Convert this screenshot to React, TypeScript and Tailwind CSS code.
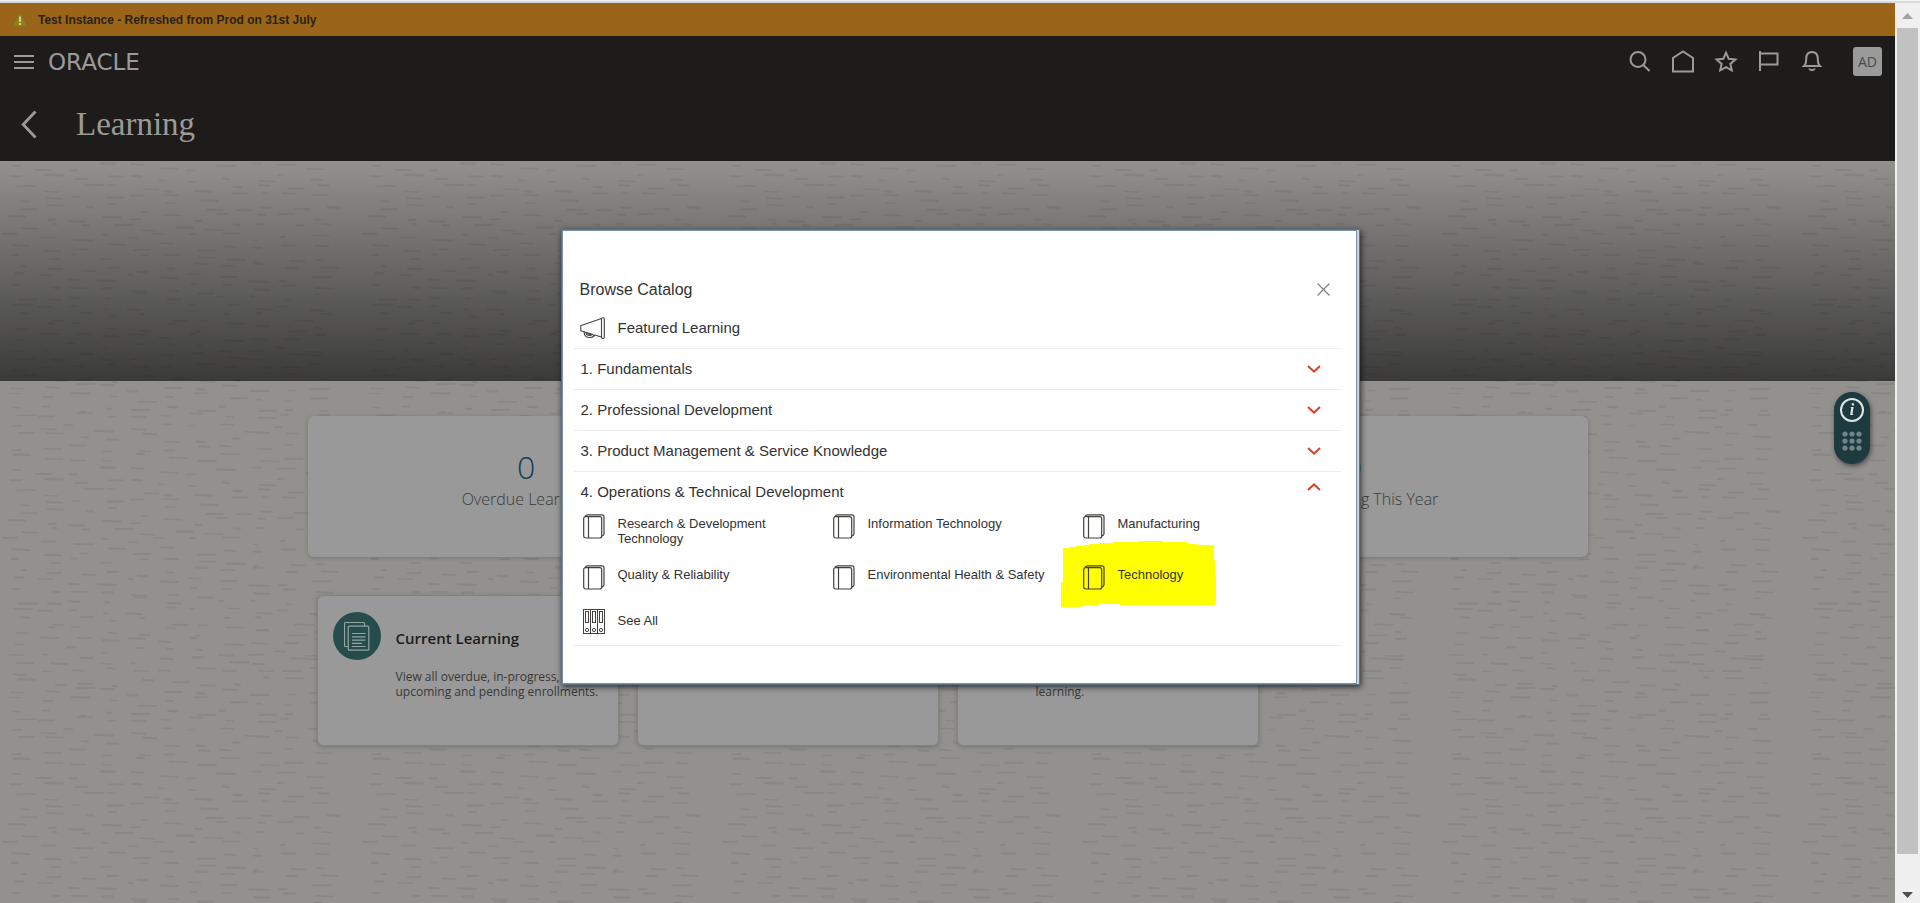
import type { ReactNode } from "react";

const sans = "font-['Liberation_Sans',Arial,sans-serif]";
const segoe = "font-['Open_Sans','Noto_Sans',sans-serif]";

// small LCG so the texture is the same on every render
function makeDashes() {
  let seed = 7;
  const rand = () => {
    seed = (seed * 16807) % 2147483647;
    return seed / 2147483647;
  };
  const list: { x: number; y: number; len: number; tilt: number; thick: number }[] = [];
  for (let row = 0; row < 30; row++) {
    const shift = rand() * 14;
    for (let col = 0; col < 11; col++) {
      list.push({
        x: 2 + col * 30 + rand() * 12 + shift,
        y: 2 + row * 10 + rand() * 9,
        len: 4 + rand() * 15,
        tilt: rand() * 1.2 - 0.4,
        thick: 1.4 + rand(),
      });
    }
  }
  return list;
}

const dashes = makeDashes();

function Texture() {
  return (
    <svg className="absolute inset-0 h-full w-full" aria-hidden="true">
      <defs>
        <pattern id="grain" width="360" height="304" patternUnits="userSpaceOnUse">
          <g stroke="#888784" strokeLinecap="round">
            {dashes.map((d, i) => (
              <line key={i} x1={d.x} y1={d.y} x2={d.x + d.len} y2={d.y + d.tilt} strokeWidth={d.thick} />
            ))}
          </g>
        </pattern>
      </defs>
      <rect width="100%" height="100%" fill="url(#grain)" />
    </svg>
  );
}

function HeaderIcon({ label, children }: { label: string; children: ReactNode }) {
  return (
    <button aria-label={label} className="h-6 w-6">
      <svg viewBox="0 0 24 24" width="24" height="24" fill="none" stroke="#9b9a99" strokeWidth="2">
        {children}
      </svg>
    </button>
  );
}

function BookIcon() {
  return (
    <svg width="22" height="25" viewBox="0 0 22 25" fill="none" stroke="#45413f" strokeWidth="1.2" className="shrink-0">
      <rect x="0.7" y="2.6" width="18" height="21.4" rx="2" />
      <path d="M5.5 2.6V24" />
      <path d="M2 2.6C2.6 1.3 3.4.8 4.6.8H19c1.4 0 2 .7 2 2v17c0 1.4-.8 2-2.3 2.4" />
    </svg>
  );
}

function BindersIcon() {
  return (
    <svg width="22" height="25" viewBox="0 0 22 25" fill="none" stroke="#45413f" strokeWidth="1" className="shrink-0">
      <rect x="0.5" y="0.5" width="21" height="24" />
      <path d="M7.5.5v24M14.5.5v24" />
      <rect x="2.5" y="2.5" width="3" height="11" />
      <rect x="9.5" y="2.5" width="3" height="11" />
      <rect x="16.5" y="2.5" width="3" height="11" />
      <circle cx="4" cy="21" r="1.6" />
      <circle cx="11" cy="21" r="1.6" />
      <circle cx="18" cy="21" r="1.6" />
    </svg>
  );
}

function Chevron({ open }: { open?: boolean }) {
  return (
    <svg width="14" height="8" viewBox="0 0 14 8" fill="none" stroke="#d6432f" strokeWidth="2">
      <path d={open ? "M1 7l6-5.6L13 7" : "M1 1l6 5.6L13 1"} />
    </svg>
  );
}

const sections = ["1. Fundamentals", "2. Professional Development", "3. Product Management & Service Knowledge"];

const topics = [
  "Research & Development Technology",
  "Information Technology",
  "Manufacturing",
  "Quality & Reliability",
  "Environmental Health & Safety",
];

const stats = [
  { value: "0", label: "Overdue Learning" },
  { value: "0", label: "Required Learning" },
  { value: "0", label: "Total Learning This Year" },
];

const cards = [
  { title: "Current Learning", text: "View all overdue, in-progress, upcoming and pending enrollments." },
  { title: "Browse Catalog", text: "View the catalog." },
  { title: "Learning History", text: "View all of your completed past learning." },
];

function CatalogDialog() {
  return (
    <div className="fixed inset-0 flex items-start justify-center pt-[229px]">
      <div
        role="dialog"
        aria-labelledby="catalog-title"
        className={`${sans} w-full max-w-[799px] border border-[#5b7489] bg-[#cdd0d2] pr-[2px] text-[#333] shadow-[1px_2px_6px_rgba(0,0,0,0.7)]`}
      >
        <div className="border border-[#7391ac] bg-white pt-10 pr-[15px] pb-[37px] pl-[10px]">
          <header className="flex h-[37px] items-center justify-between pr-[11px] pl-[7px]">
            <h2 id="catalog-title" className="text-base">Browse Catalog</h2>
            <button aria-label="Close">
              <svg width="13" height="13" viewBox="0 0 13 13" stroke="#7d8283" strokeWidth="1.2">
                <path d="M.5.5l12 12M12.5.5l-12 12" />
              </svg>
            </button>
          </header>
          <a href="#featured" className="flex h-[41px] items-center gap-[13px] border-b border-[#ececec] pl-[7px] text-[15px]">
            <svg width="25" height="22" viewBox="0 0 25 22" fill="none" stroke="#45413f" strokeWidth="1.1" strokeLinejoin="round">
              <path d="M21.5 1.6L4.2 7.4.8 8.6v5.2l3.2 1 8.8 2.8 1.2 1.4.6-1 6.9 2" />
              <rect x="21.5" y="0.8" width="2.8" height="20.6" rx="1.2" />
              <path d="M4 14.8c.2 2.6 1 4.2 2.4 5 2 1 5.6 1.2 7.5-.8M5.8 15.5c.2 1.7 1 2.6 2.4 2.7l3.4.2M7.5 16c1 1.4 2.5 1.9 4.3 1.4" />
            </svg>
            Featured Learning
          </a>
          {sections.map((name) => (
            <button key={name} className="flex h-[41px] w-full items-center justify-between border-b border-[#ececec] pr-5 pl-2 text-[15px]">
              {name}
              <Chevron />
            </button>
          ))}
          <button aria-expanded="true" className="flex h-10 w-full items-center justify-between pr-5 pl-2 text-[15px]">
            4. Operations &amp; Technical Development
            <span className="pb-[10px]">
              <Chevron open />
            </span>
          </button>
          <div className="grid grid-cols-3 border-b border-[#ececec] pr-2 pb-[11px] pl-[10px] text-[13px] leading-[15px]">
            {topics.map((topic) => (
              <a key={topic} href="#topic" className="flex items-start gap-[13px] pt-[2px] pb-[17px]">
                <BookIcon />
                <span className="max-w-[180px] pt-[2px]">{topic}</span>
              </a>
            ))}
            <a href="#technology" className="relative isolate flex items-start gap-[13px] pt-[2px] pb-[17px]">
              {/* highlighter stroke behind the link */}
              <svg className="absolute -top-[22px] -left-[22px] -z-10" width="155" height="67" viewBox="0 0 155 67" fill="#ffff00">
                <path d="M2 7h6V6h7V5h8V4h5V3h11V2h13V1h25V0h25v1h24v2h10v1h17v15l1 1v12l1 1v27h-1v4H59v-1H38v1H24v1h-4v1H0V41h2z" />
              </svg>
              <BookIcon />
              <span className="pt-[2px]">Technology</span>
            </a>
            <a href="#all" className="flex items-start gap-[13px] pt-[2px]">
              <BindersIcon />
              <span className="pt-1">See All</span>
            </a>
          </div>
        </div>
      </div>
    </div>
  );
}

export default function App() {
  return (
    <div className="flex min-h-screen flex-col bg-[#92918e]">
      <div className="h-[3px] border-t border-[#f5f5f5] bg-[#d5dadd]"></div>
      <div className="flex flex-1">
        <main className="flex flex-1 flex-col">
          <div className={`${sans} flex h-[33px] items-center gap-[10px] bg-[#9a6519] pl-3 text-xs font-bold text-[#2a2117]`}>
            <svg width="16" height="15" viewBox="0 0 16 15">
              <path d="M8 .8L15.3 14.3H.7z" fill="#98810d" stroke="#7e7320" strokeLinejoin="round" />
              <path d="M8 4.5v5.2M8 11v2" stroke="#c9c8b8" strokeWidth="2" />
            </svg>
            Test Instance - Refreshed from Prod on 31st July
          </div>

          <header className="h-[125px] bg-[#1e1c1a] text-[#9b9a99]">
            <div className="flex h-[51px] items-center justify-between pr-[13px] pl-[14px]">
              <div className="flex items-center gap-[14px]">
                <button aria-label="Menu">
                  <svg width="20" height="14" viewBox="0 0 20 14" stroke="#9b9a99" strokeWidth="2">
                    <path d="M0 1h20M0 7h20M0 13h20" />
                  </svg>
                </button>
                <span className="font-['DejaVu_Sans',sans-serif] text-[23px] leading-6">ORACLE</span>
              </div>
              <div className="flex items-center gap-[19px]">
                <HeaderIcon label="Search">
                  <circle cx="10" cy="9.5" r="7.5" />
                  <path d="M15.3 15L21.5 21" />
                </HeaderIcon>
                <HeaderIcon label="Home">
                  <path d="M2 21.5V8L12 1.5 22 8v13.5z" />
                </HeaderIcon>
                <HeaderIcon label="Favorites">
                  <path d="M12 2.7l2.7 6.1 6.7.7-5 4.4 1.4 6.5-5.8-3.300-5.8 3.300 1.400-6.500-5-4.400 6.700-.7z" strokeWidth="2" />
                </HeaderIcon>
                <HeaderIcon label="Watchlist">
                  <path d="M3 1v20M3 3.500h17.500v11H3" />
                </HeaderIcon>
                <HeaderIcon label="Notifications">
                  <path d="M4 16h16c-2.200-2-2.200-4-2.200-7C17.800 4.500 15.500 2 12 2S6.200 4.500 6.200 9c0 3 0 5-2.200 7z" />
                  <path d="M9.200 18.500c.5 1.300 1.500 1.800 2.800 1.800s2.300-.5 2.800-1.800" />
                </HeaderIcon>
                <button className={`${segoe} ml-[10px] h-[29px] w-[29px] rounded-[3px] bg-[#9a9a9a] text-[14px] text-[#484b4d]`}>AD</button>
              </div>
            </div>
            <div className="flex items-center gap-[39px] pt-[19px] pl-[21px]">
              <button aria-label="Back">
                <svg width="16" height="29" viewBox="0 0 16 29" fill="none" stroke="#9b9a99" strokeWidth="2.8">
                  <path d="M14.500 1.500L2.200 14.500l12.300 13" />
                </svg>
              </button>
              <h1 className="font-['Liberation_Serif',Georgia,serif] text-[33px] leading-9">Learning</h1>
            </div>
          </header>

          <div className="relative flex-1">
            <Texture />
            <div className="relative h-[220px] bg-linear-to-b from-black/0 to-black/60"></div>
            <div className={`${segoe} relative mx-auto max-w-[1280px] pt-[35px]`}>
              <section className="grid h-[141px] grid-cols-3 rounded-md bg-[#999] pt-[33px] pr-7 pl-3 shadow-[0_1px_4px_rgba(0,0,0,0.2)]">
                {stats.map((stat) => (
                  <div key={stat.label} className="text-center font-light">
                    <p className="text-[32px] leading-9 text-[#123f52]">{stat.value}</p>
                    <p className="text-base leading-7 text-[#3b3b3b]">{stat.label}</p>
                  </div>
                ))}
              </section>
              <section className="mt-[38px] flex gap-[18px] px-[9px]">
                {cards.map((card) => (
                  <a
                    key={card.title}
                    href="#card"
                    className="flex h-[151px] w-[302px] gap-[15px] rounded-md border border-[#828282] bg-[#999] pt-4 pl-[15px] shadow-[0_1px_4px_rgba(0,0,0,0.2)]"
                  >
                    <span className="flex h-12 w-12 shrink-0 items-center justify-center rounded-full bg-[#264d4b]">
                      <svg width="26" height="30" viewBox="0 0 26 30" fill="none" stroke="#93a3a2" strokeWidth="1.2">
                        <path d="M4 25.500H1.500a1 1 0 01-1-1v-22a1 1 0 011-1h18a1 1 0 011 1V5" />
                        <rect x="4.2" y="5.2" width="20.6" height="24" rx="1" />
                        <path d="M8 12.500h13.500M8 15.800h13.500M8 19.100h13.500M8 22.400h10M8 25.500h13.500" />
                      </svg>
                    </span>
                    <span className="pt-[14px]">
                      <span className="block text-[15px] leading-6 font-semibold text-[#1c1c1c]">{card.title}</span>
                      <span className="mt-[19px] block max-w-[212px] text-[12px] leading-[15px] font-medium text-[#383838]">{card.text}</span>
                    </span>
                  </a>
                ))}
              </section>
            </div>
          </div>
        </main>

        <div className="flex w-[25px] flex-col items-center bg-[#f0f0f0] pt-[10px] pb-[5px]" aria-hidden="true">
          <svg width="11" height="6" viewBox="0 0 11 6" fill="#a3a3a3">
            <path d="M0 6L5.500 0 11 6z" />
          </svg>
          <div className="mt-[9px] mb-[38px] w-[21px] flex-1 bg-[#c1c1c1]"></div>
          <svg width="11" height="6" viewBox="0 0 11 6" fill="#505050">
            <path d="M0 0l5.500 6L11 0z" />
          </svg>
        </div>
      </div>

      <CatalogDialog />

      <div className="fixed top-[392px] right-[50px] flex h-[72px] w-9 flex-col items-center gap-[9px] rounded-full bg-[#1d3a3f] pt-[6px] shadow-[1px_2px_5px_rgba(0,0,0,0.5)]">
        <button
          aria-label="Information"
          className="h-6 w-6 rounded-full border-2 border-[#dfe6e6] font-['Liberation_Serif',serif] text-base leading-5 font-bold text-[#dfe6e6] italic"
        >
          i
        </button>
        <svg width="20" height="20" viewBox="0 0 20 20" fill="#6f8588">
          {[3, 10, 17].map((y) => [3, 10, 17].map((x) => <circle key={`${x}-${y}`} cx={x} cy={y} r="2.6" />))}
        </svg>
      </div>
    </div>
  );
}
